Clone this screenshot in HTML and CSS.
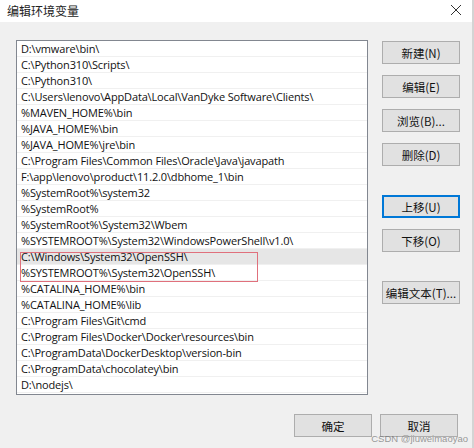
FILE: index.html
```html
<!DOCTYPE html>
<html lang="zh-CN">
<head>
  <meta charset="UTF-8">
  <title>编辑环境变量</title>
  <link rel="stylesheet" href="styles.css">
</head>
<body>
  <div class="window">
    <div class="titlebar">
      <span class="title">编辑环境变量</span>
      <svg class="close" width="12" height="12" viewBox="0 0 12 12">
        <path d="M1 1 L11 11 M11 1 L1 11" stroke="#333" stroke-width="1" fill="none"/>
      </svg>
    </div>

    <div class="main">
      <div class="list">
        <div class="row">D:\vmware\bin\</div>
        <div class="row">C:\Python310\Scripts\</div>
        <div class="row">C:\Python310\</div>
        <div class="row">C:\Users\lenovo\AppData\Local\VanDyke Software\Clients\</div>
        <div class="row">%MAVEN_HOME%\bin</div>
        <div class="row">%JAVA_HOME%\bin</div>
        <div class="row">%JAVA_HOME%\jre\bin</div>
        <div class="row">C:\Program Files\Common Files\Oracle\Java\javapath</div>
        <div class="row">F:\app\lenovo\product\11.2.0\dbhome_1\bin</div>
        <div class="row">%SystemRoot%\system32</div>
        <div class="row">%SystemRoot%</div>
        <div class="row">%SystemRoot%\System32\Wbem</div>
        <div class="row">%SYSTEMROOT%\System32\WindowsPowerShell\v1.0\</div>
        <div class="row selected">C:\Windows\System32\OpenSSH\</div>
        <div class="row">%SYSTEMROOT%\System32\OpenSSH\</div>
        <div class="row">%CATALINA_HOME%\bin</div>
        <div class="row">%CATALINA_HOME%\lib</div>
        <div class="row">C:\Program Files\Git\cmd</div>
        <div class="row">C:\Program Files\Docker\Docker\resources\bin</div>
        <div class="row">C:\ProgramData\DockerDesktop\version-bin</div>
        <div class="row">C:\ProgramData\chocolatey\bin</div>
        <div class="row">D:\nodejs\</div>
        <!-- annotation box drawn over the two OpenSSH rows -->
        <div class="mark"></div>
      </div>

      <div class="side">
        <div class="group">
          <button class="btn">新建(N)</button>
          <button class="btn">编辑(E)</button>
          <button class="btn">浏览(B)...</button>
          <button class="btn">删除(D)</button>
        </div>
        <div class="group">
          <button class="btn focus">上移(U)</button>
          <button class="btn">下移(O)</button>
        </div>
        <div class="group">
          <button class="btn">编辑文本(T)...</button>
        </div>
      </div>
    </div>

    <div class="footer">
      <button class="btn">确定</button>
      <button class="btn">取消</button>
    </div>

    <div class="watermark">CSDN @jiuweimaoyao</div>
  </div>
</body>
</html>
```

FILE: styles.css
```css
* {
  margin: 0;
  padding: 0;
  box-sizing: border-box;
}

body {
  width: 474px;
  height: 448px;
  overflow: hidden;
  background-color: #f0f0f0;
  font-family: 'Noto Sans CJK SC', sans-serif;
  font-size: 12px;
  color: #000;
}

.window {
  position: relative;
  width: 474px;
  height: 448px;
  background-color: #f0f0f0;
  border-right: 2px solid #d4d4d4;
}

.titlebar {
  height: 22px;
  background-color: #fff;
  display: flex;
  align-items: center;
  justify-content: space-between;
  padding: 0 10px 2px 7px;
}

.title {
  font-size: 12px;
  color: #222;
}

.main {
  display: flex;
  gap: 14px;
  padding: 18px 0 0 16px;
}

.list {
  position: relative;
  width: 352px;
  height: 355px;
  background-color: #fff;
  border: 1px solid #828790;
}

.row {
  height: 16px;
  line-height: 15px;
  padding-left: 4px;
  border-bottom: 1px solid #f0f0f0;
  white-space: nowrap;
  overflow: hidden;
  font-family: 'Open Sans', 'Noto Sans CJK SC', sans-serif;
  font-size: 11px;
  letter-spacing: -0.15px;
  color: #111;
}

.row.selected {
  background-color: #e6e6e6;
}

.mark {
  position: absolute;
  left: 3px;
  top: 211px;
  width: 238px;
  height: 30px;
  border: 1px solid #e0707c;
}

.side {
  display: flex;
  flex-direction: column;
  gap: 29px;
  padding-top: 1px;
}

.group {
  display: flex;
  flex-direction: column;
  gap: 11px;
}

.btn {
  width: 78px;
  height: 23px;
  background-color: #e1e1e1;
  border: 1px solid #adadad;
  font-family: 'Noto Sans CJK SC', sans-serif;
  font-size: 11.5px;
  color: #111;
}

.btn.focus {
  border: 2px solid #0078d7;
}

.footer {
  display: flex;
  justify-content: flex-end;
  gap: 8px;
  padding: 19px 14px 0 0;
}

.watermark {
  position: absolute;
  right: 4px;
  bottom: 4px;
  font-family: 'Liberation Sans', sans-serif;
  font-size: 9.5px;
  color: rgba(110, 110, 110, 0.7);
}
```
